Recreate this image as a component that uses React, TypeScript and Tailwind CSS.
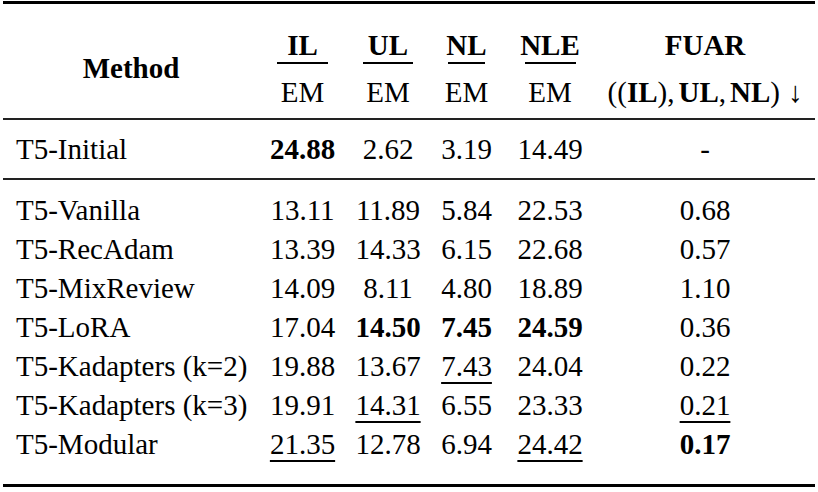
type Cell = [string, '' | 'b' | 'u'];

const cols = 'grid grid-cols-[256px_87px_84px_73px_94px_216px]';

const initial: Cell[] = [['24.88', 'b'], ['2.62', ''], ['3.19', ''], ['14.49', ''], ['-', '']];

const rows: { name: string; cells: Cell[] }[] = [
  { name: 'T5-Vanilla', cells: [['13.11', ''], ['11.89', ''], ['5.84', ''], ['22.53', ''], ['0.68', '']] },
  { name: 'T5-RecAdam', cells: [['13.39', ''], ['14.33', ''], ['6.15', ''], ['22.68', ''], ['0.57', '']] },
  { name: 'T5-MixReview', cells: [['14.09', ''], ['8.11', ''], ['4.80', ''], ['18.89', ''], ['1.10', '']] },
  { name: 'T5-LoRA', cells: [['17.04', ''], ['14.50', 'b'], ['7.45', 'b'], ['24.59', 'b'], ['0.36', '']] },
  { name: 'T5-Kadapters (k=2)', cells: [['19.88', ''], ['13.67', ''], ['7.43', 'u'], ['24.04', ''], ['0.22', '']] },
  { name: 'T5-Kadapters (k=3)', cells: [['19.91', ''], ['14.31', 'u'], ['6.55', ''], ['23.33', ''], ['0.21', 'u']] },
  { name: 'T5-Modular', cells: [['21.35', 'u'], ['12.78', ''], ['6.94', ''], ['24.42', 'u'], ['0.17', 'b']] },
];

function Value({ cell }: { cell: Cell }) {
  const [text, style] = cell;
  if (style === 'b') return <span className="font-bold">{text}</span>;
  if (style === 'u')
    return <span className="underline decoration-[1.5px] underline-offset-[6px]">{text}</span>;
  return <span>{text}</span>;
}

function Row({ name, cells, h }: { name: string; cells: Cell[]; h: string }) {
  return (
    <div className={`${cols} ${h} items-center`}>
      <div className="pl-[13px] whitespace-nowrap">{name}</div>
      {cells.map((c, i) => (
        <div key={i} className="text-center">
          <Value cell={c} />
        </div>
      ))}
    </div>
  );
}

function Metric({ top, line }: { top: string; line: string }) {
  return (
    <div className="flex flex-col items-center">
      <div className="font-bold leading-[36px]">{top}</div>
      <div className={`${line} h-[1.5px] bg-black -mt-[1px] mb-[10.5px]`} />
      <div className="leading-[36px]">EM</div>
    </div>
  );
}

export default function App() {
  return (
    <div className="w-[818px] h-[492px] bg-white text-black text-[29px] leading-[39px] pt-[1px] pl-[3px] [font-family:Liberation_Serif,serif]">
      <div className="w-[812px]">
        <div className="h-[3px] bg-black" />
        <div className={`${cols} h-[114px] items-start pt-[23px]`}>
          <div className="text-center font-bold leading-[36px] mt-[23px]">Method</div>
          <Metric top="IL" line="w-[51px]" />
          <Metric top="UL" line="w-[50px]" />
          <Metric top="NL" line="w-[37px]" />
          <Metric top="NLE" line="w-[51px]" />
          <div className="flex flex-col items-center">
            <div className="font-bold leading-[36px]">FUAR</div>
            <div className="leading-[36px] mt-[11px] whitespace-nowrap">
              ((<b>IL</b>),<span className="ml-[4px]" />
              <b>UL</b>,<span className="ml-[4px]" />
              <b>NL</b>)<span className="ml-[8px]">↓</span>
            </div>
          </div>
        </div>
        <div className="h-[2px] bg-[#222]" />
        <Row name="T5-Initial" cells={initial} h="h-[58px]" />
        <div className="h-[2px] bg-[#222]" />
        <div className="pt-[11px] pb-[20px]">
          {rows.map((r) => (
            <Row key={r.name} name={r.name} cells={r.cells} h="h-[39px]" />
          ))}
        </div>
        <div className="h-[3px] bg-black" />
      </div>
    </div>
  );
}
